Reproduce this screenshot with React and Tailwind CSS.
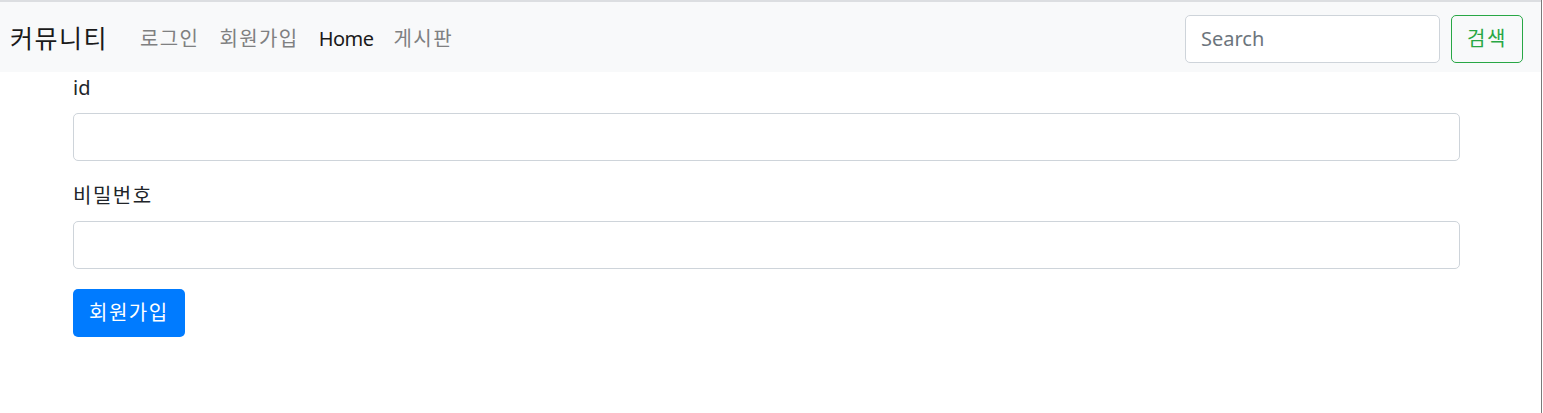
const font = { fontFamily: '"Noto Sans", "Noto Sans CJK KR", sans-serif' };

const NAV_LINKS = [
  { label: "로그인", active: false },
  { label: "회원가입", active: false },
  { label: "Home", active: true },
  { label: "게시판", active: false },
];

function Navbar() {
  return (
    <nav className="flex h-[70px] items-center bg-[#f8f9fa] pl-[10px] pr-[18px] pt-[3px]">
      <a href="#" className="mr-[22px] text-[25px] leading-[1.5] tracking-[1.5px] text-[#1a1a1a]">
        커뮤니티
      </a>
      <ul className="flex items-center">
        {NAV_LINKS.map((link) => (
          <li key={link.label}>
            <a
              href="#"
              className={
                link.active
                  ? "block px-[10px] text-[20px] leading-[1.5] tracking-[-0.5px] text-[#1a1a1a]"
                  : "block px-[10px] text-[20px] leading-[1.5] tracking-[1.4px] text-[#7f8081]"
              }
            >
              {link.label}
            </a>
          </li>
        ))}
      </ul>
      <form className="ml-auto flex items-center" onSubmit={(e) => e.preventDefault()}>
        <input
          type="search"
          placeholder="Search"
          className="mr-[11px] h-[48px] w-[255px] rounded-[5px] border border-[#ced4da] bg-white px-[15px] text-[20px] text-[#495057] outline-none placeholder:text-[#6c757d]"
          style={font}
        />
        <button
          type="submit"
          className="h-[48px] w-[72px] rounded-[5px] border border-[#28a745] text-[20px] tracking-[1.5px] text-[#28a745]"
          style={font}
        >
          검색
        </button>
      </form>
    </nav>
  );
}

function Field({ label, type, korean }) {
  return (
    <div className="mb-[20px]">
      <label
        className={
          korean
            ? "mb-[10px] block text-[20px] leading-[30px] tracking-[1.5px] text-[#212529]"
            : "mb-[10px] block text-[20px] leading-[30px] text-[#212529]"
        }
      >
        {label}
      </label>
      <input
        type={type}
        className="block h-[48px] w-full rounded-[5px] border border-[#ced4da] bg-white px-[15px] text-[20px] outline-none"
        style={font}
      />
    </div>
  );
}

export default function App() {
  return (
    <div className="h-[413px] w-[1542px] border-r border-[#7a7a7a] bg-white" style={font}>
      <div className="h-[2px] bg-[#dcdee1]" />
      <Navbar />
      <form className="ml-[73px] w-[1387px] pt-[1px]" onSubmit={(e) => e.preventDefault()}>
        <Field label="id" type="text" />
        <Field label="비밀번호" type="password" korean />
        <button
          type="submit"
          className="h-[48px] rounded-[5px] bg-[#007bff] px-[16px] text-[20px] tracking-[1.5px] text-white"
          style={font}
        >
          회원가입
        </button>
      </form>
    </div>
  );
}
